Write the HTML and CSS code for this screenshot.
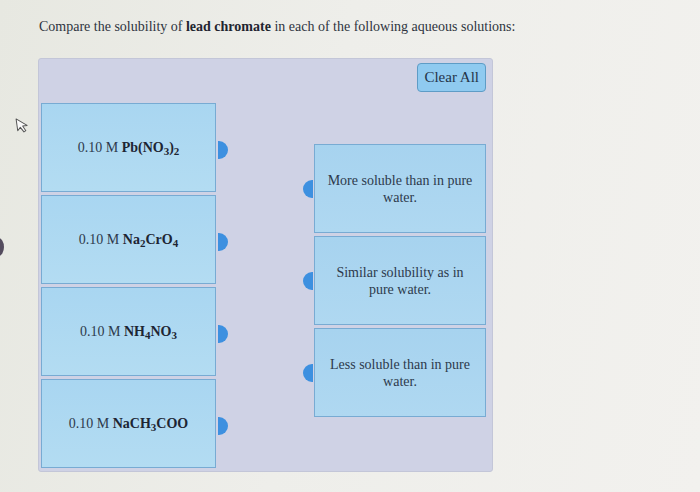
FILE: index.html
```html
<!DOCTYPE html>
<html lang="en">
<head>
    <meta charset="UTF-8">
    <meta name="viewport" content="width=device-width, initial-scale=1.0">
    <title>Solubility of Lead Chromate</title>
    <link rel="stylesheet" href="styles.css">
</head>
<body>

<p class="prompt">Compare the solubility of <b>lead chromate</b> in each of the following aqueous solutions:</p>

<div class="board">
    <div class="toolbar">
        <button class="clear-btn">Clear All</button>
    </div>

    <div class="columns">
        <!-- draggable solutions -->
        <div class="col col-left">
            <div class="card">
                <span>0.10 M <b>Pb(NO<sub>3</sub>)<sub>2</sub></b></span>
                <i class="pin pin-right"></i>
            </div>
            <div class="card">
                <span>0.10 M <b>Na<sub>2</sub>CrO<sub>4</sub></b></span>
                <i class="pin pin-right"></i>
            </div>
            <div class="card">
                <span>0.10 M <b>NH<sub>4</sub>NO<sub>3</sub></b></span>
                <i class="pin pin-right"></i>
            </div>
            <div class="card">
                <span>0.10 M <b>NaCH<sub>3</sub>COO</b></span>
                <i class="pin pin-right"></i>
            </div>
        </div>

        <!-- answer targets -->
        <div class="col col-right">
            <div class="card target">
                <span>More soluble than in pure water.</span>
                <i class="pin pin-left"></i>
            </div>
            <div class="card target">
                <span>Similar solubility as in pure water.</span>
                <i class="pin pin-left"></i>
            </div>
            <div class="card target">
                <span>Less soluble than in pure water.</span>
                <i class="pin pin-left"></i>
            </div>
        </div>
    </div>
</div>

<!-- mouse pointer -->
<svg class="cursor" width="16" height="18" viewBox="0 0 16 18">
    <path d="M2 2 L2 14 L5 11 L8 16 L10 15 L7.5 10 L12 10 Z" fill="#fafafa" stroke="#555" stroke-width="1" stroke-linejoin="round"/>
</svg>

<div class="edge-dot"></div>

</body>
</html>
```

FILE: styles.css
```css
body {
    margin: 0;
    height: 492px;
    overflow: hidden;
    font-family: "Liberation Serif", "Times New Roman", serif;
    color: #2b3442;
    background: linear-gradient(100deg, #e7e8e1 0%, #eeeeea 45%, #f2f1ee 100%);
    position: relative;
}

.prompt {
    margin: 0;
    padding: 18px 0 0 39px;
    font-size: 14px;
    line-height: 17px;
    color: #2e3440;
}

.prompt b {
    color: #1f2530;
}

.board {
    margin: 23px 0 0 38px;
    width: 445px;
    height: 408px;
    padding: 4px 6px 0 2px;
    background: #cfd2e5;
    border: 1px solid #c3c6d8;
    border-radius: 3px;
}

.toolbar {
    display: flex;
    justify-content: flex-end;
    margin-bottom: 11px;
}

.clear-btn {
    font-family: "Liberation Serif", "Times New Roman", serif;
    font-size: 15px;
    color: #24344a;
    background: #8fcaf0;
    border: 1px solid #5e9cc6;
    border-radius: 4px;
    height: 29px;
    padding: 0 6px;
}

.columns {
    display: flex;
    gap: 98px;
}

.col {
    display: flex;
    flex-direction: column;
    gap: 3px;
}

.col-left {
    width: 176px;
}

.col-right {
    width: 173px;
    margin-top: 41px;
}

.card {
    position: relative;
    height: 87px;
    display: flex;
    align-items: center;
    justify-content: center;
    text-align: center;
    padding: 0 10px;
    font-size: 14px;
    line-height: 17px;
    color: #2d3a4c;
    background: linear-gradient(180deg, #a9d6f1 0%, #b3dcf2 100%);
    border: 1px solid #78abd3;
}

.target {
    background: linear-gradient(180deg, #a7d3ef 0%, #afd8f1 100%);
}

.card b {
    color: #1d2533;
}

.card sub {
    font-size: 11px;
    line-height: 0;
    vertical-align: -3px;
}

/* half-round drag handles */
.pin {
    position: absolute;
    top: 50%;
    width: 10px;
    height: 18px;
    margin-top: -7px;
    background: #3d90e0;
}

.pin-right {
    right: -13px;
    border-radius: 0 10px 10px 0;
}

.pin-left {
    left: -12px;
    margin-top: -9px;
    border-radius: 10px 0 0 10px;
}

.cursor {
    position: absolute;
    left: 15px;
    top: 116px;
    transform: rotate(-8deg);
}

.edge-dot {
    position: absolute;
    left: -7px;
    top: 238px;
    width: 11px;
    height: 18px;
    border-radius: 50%;
    background: #544c5e;
}
```
